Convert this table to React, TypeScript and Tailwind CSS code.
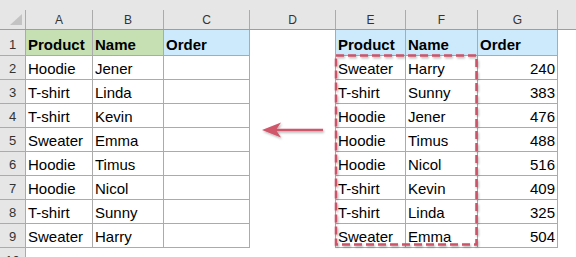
// Spreadsheet screenshot: two tables, the right one selected (dashed), arrow pointing left

const letters = ['A', 'B', 'C', 'D', 'E', 'F', 'G'];
const colW = ['w-[67px]', 'w-[71px]', 'w-[86px]', 'w-[86px]', 'w-[70px]', 'w-[72px]', 'w-[80px]'];

const leftRows: [string, string][] = [
  ['Hoodie', 'Jener'],
  ['T-shirt', 'Linda'],
  ['T-shirt', 'Kevin'],
  ['Sweater', 'Emma'],
  ['Hoodie', 'Timus'],
  ['Hoodie', 'Nicol'],
  ['T-shirt', 'Sunny'],
  ['Sweater', 'Harry'],
];

const rightRows: [string, string, number][] = [
  ['Sweater', 'Harry', 240],
  ['T-shirt', 'Sunny', 383],
  ['Hoodie', 'Jener', 476],
  ['Hoodie', 'Timus', 488],
  ['Hoodie', 'Nicol', 516],
  ['T-shirt', 'Kevin', 409],
  ['T-shirt', 'Linda', 325],
  ['Sweater', 'Emma', 504],
];

type CellProps = {
  w: string;
  text?: string | number;
  bg?: string;
  bold?: boolean;
  right?: boolean;
  grid?: boolean; // draws right + bottom line
  edge?: boolean; // right line only
};

function Cell({ w, text, bg = 'bg-white', bold, right, grid, edge }: CellProps) {
  return (
    <div
      className={[
        w,
        bg,
        'h-full shrink-0 flex items-end pb-[2px] text-[15px] leading-[17px] text-black whitespace-nowrap overflow-hidden',
        right ? 'justify-end pr-[2px]' : 'pl-[2px]',
        bold ? 'font-bold' : '',
        grid ? 'border-r border-b border-[#ababab]' : '',
        edge ? 'border-r border-[#ababab]' : '',
      ].join(' ')}
    >
      {text}
    </div>
  );
}

function RowHead({ n }: { n: number }) {
  return (
    <div className="w-[26px] h-full shrink-0 bg-[#e6e6e6] border-r border-b border-[#ababab] flex items-end justify-center pb-[2px] text-[13px] leading-[17px] text-[#333]">
      {n}
    </div>
  );
}

function Overlay() {
  return (
    <svg className="absolute left-0 top-0 pointer-events-none" width="576" height="257">
      <defs>
        <filter id="sh" x="-10%" y="-10%" width="130%" height="130%">
          <feDropShadow dx="1" dy="1.5" stdDeviation="1" floodColor="#000" floodOpacity="0.3" />
        </filter>
      </defs>
      {/* selection marquee */}
      <rect
        x="336"
        y="55.5"
        width="140.5"
        height="189"
        fill="none"
        stroke="#cc5268"
        strokeWidth="2.5"
        strokeDasharray="8 4"
        filter="url(#sh)"
      />
      {/* arrow */}
      <g filter="url(#sh)">
        <line x1="323" y1="130" x2="272" y2="130" stroke="#d0566b" strokeWidth="2.5" />
        <path d="M262 130 L281 122.5 L276 130 L281 137.5 Z" fill="#d0566b" />
      </g>
    </svg>
  );
}

export default function App() {
  return (
    <div className="relative w-[576px] h-[257px] overflow-hidden bg-white font-['Liberation_Sans',Arial,sans-serif]">
      {/* top strip */}
      <div className="h-[10px] bg-[#e6e6e6]" />

      {/* column letters */}
      <div className="flex h-[20px] bg-[#e6e6e6] border-b border-[#9e9e9e]">
        <div className="w-[26px] h-full shrink-0 border-r border-[#ababab] relative">
          <svg className="absolute left-[10px] top-[4px]" width="13" height="11" viewBox="0 0 13 11">
            <polygon points="12,0 12,11 0,11" fill="#c3c3c3" />
          </svg>
        </div>
        {letters.map((l, i) => (
          <div
            key={l}
            className={`${colW[i]} h-full shrink-0 border-r border-[#ababab] flex items-center justify-center text-[12px] text-[#333]`}
          >
            {l}
          </div>
        ))}
        <div className="flex-1" />
      </div>

      {/* row 1: headers */}
      <div className="flex h-[26px]">
        <RowHead n={1} />
        <Cell w={colW[0]} text="Product" bold bg="bg-[#c6e0b4]" grid />
        <Cell w={colW[1]} text="Name" bold bg="bg-[#c6e0b4]" grid />
        <Cell w={colW[2]} text="Order" bold bg="bg-[#cdeafd]" grid />
        <Cell w={colW[3]} edge />
        <Cell w={colW[4]} text="Product" bold bg="bg-[#cdeafd]" grid />
        <Cell w={colW[5]} text="Name" bold bg="bg-[#cdeafd]" grid />
        <Cell w={colW[6]} text="Order" bold bg="bg-[#cdeafd]" grid />
        <div className="flex-1" />
      </div>

      {leftRows.map((r, i) => (
        <div key={i} className="flex h-[24px]">
          <RowHead n={i + 2} />
          <Cell w={colW[0]} text={r[0]} grid />
          <Cell w={colW[1]} text={r[1]} grid />
          <Cell w={colW[2]} grid />
          <Cell w={colW[3]} edge />
          <Cell w={colW[4]} text={rightRows[i][0]} grid />
          <Cell w={colW[5]} text={rightRows[i][1]} grid />
          <Cell w={colW[6]} text={rightRows[i][2]} right grid />
          <div className="flex-1" />
        </div>
      ))}

      {/* row 10, cut off */}
      <div className="flex h-[24px]">
        <RowHead n={10} />
        <div className="flex-1" />
      </div>

      <Overlay />
    </div>
  );
}
